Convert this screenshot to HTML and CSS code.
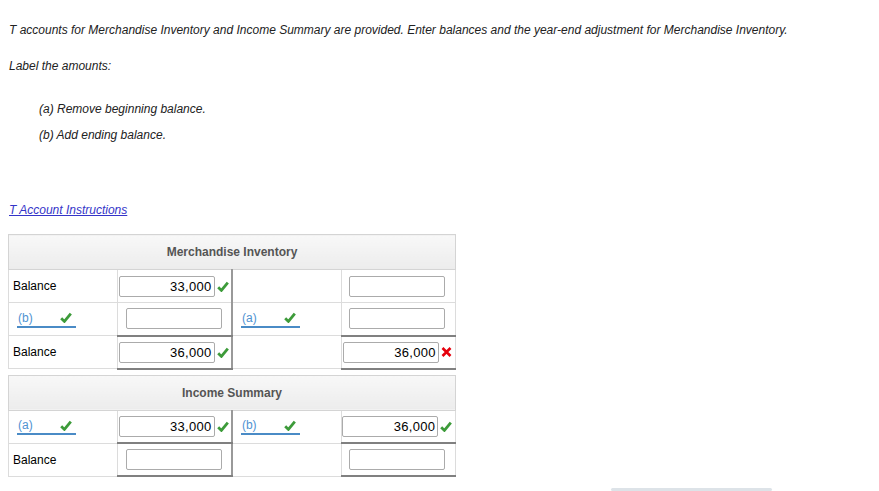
FILE: index.html
```html
<!DOCTYPE html>
<html>
<head>
<meta charset="utf-8">
<link rel="stylesheet" href="styles.css">
</head>
<body>
<div class="page">
  <p class="intro">T accounts for Merchandise Inventory and Income Summary are provided. Enter balances and the year-end adjustment for Merchandise Inventory.</p>
  <p class="label-head">Label the amounts:</p>
  <ul class="steps">
    <li>(a) Remove beginning balance.</li>
    <li>(b) Add ending balance.</li>
  </ul>
  <a class="instr" href="#">T Account Instructions</a>

  <table class="taccount">
    <colgroup><col class="c1"><col class="c2"><col class="c3"><col class="c4"></colgroup>
    <tr class="head"><th colspan="4">Merchandise Inventory</th></tr>
    <tr>
      <td class="lbl">Balance</td>
      <td class="amt dr"><span class="inp">33,000</span><svg class="ok" viewBox="0 0 12 11"><path d="M1.2 6.2 L4.4 9.4 L10.8 1.6"/></svg></td>
      <td class="lbl"></td>
      <td class="amt"><span class="inp"></span></td>
    </tr>
    <tr>
      <td class="lbl"><span class="sel"><span>(b)</span><svg class="ok" viewBox="0 0 12 11"><path d="M1.2 6.2 L4.4 9.4 L10.8 1.6"/></svg></span></td>
      <td class="amt dr tot"><span class="inp"></span></td>
      <td class="lbl"><span class="sel"><span>(a)</span><svg class="ok" viewBox="0 0 12 11"><path d="M1.2 6.2 L4.4 9.4 L10.8 1.6"/></svg></span></td>
      <td class="amt tot"><span class="inp"></span></td>
    </tr>
    <tr>
      <td class="lbl">Balance</td>
      <td class="amt dr tot"><span class="inp">36,000</span><svg class="ok" viewBox="0 0 12 11"><path d="M1.2 6.2 L4.4 9.4 L10.8 1.6"/></svg></td>
      <td class="lbl"></td>
      <td class="amt tot"><span class="inp">36,000</span><svg class="bad" viewBox="0 0 11 10"><path d="M1.5 1 L9.5 9 M9.5 1 L1.5 9"/></svg></td>
    </tr>
  </table>

  <table class="taccount second">
    <colgroup><col class="c1"><col class="c2"><col class="c3"><col class="c4"></colgroup>
    <tr class="head"><th colspan="4">Income Summary</th></tr>
    <tr>
      <td class="lbl"><span class="sel"><span>(a)</span><svg class="ok" viewBox="0 0 12 11"><path d="M1.2 6.2 L4.4 9.4 L10.8 1.6"/></svg></span></td>
      <td class="amt dr tot"><span class="inp">33,000</span><svg class="ok" viewBox="0 0 12 11"><path d="M1.2 6.2 L4.4 9.4 L10.8 1.6"/></svg></td>
      <td class="lbl"><span class="sel"><span>(b)</span><svg class="ok" viewBox="0 0 12 11"><path d="M1.2 6.2 L4.4 9.4 L10.8 1.6"/></svg></span></td>
      <td class="amt tot"><span class="inp">36,000</span><svg class="ok" viewBox="0 0 12 11"><path d="M1.2 6.2 L4.4 9.4 L10.8 1.6"/></svg></td>
    </tr>
    <tr>
      <td class="lbl">Balance</td>
      <td class="amt dr tot"><span class="inp"></span></td>
      <td class="lbl"></td>
      <td class="amt tot"><span class="inp"></span></td>
    </tr>
  </table>
  <div class="bottom-bar"></div>
</div>
</body>
</html>
```

FILE: styles.css
```css
html, body {
  margin: 0;
  padding: 0;
  background: #fff;
}
body {
  font-family: "Liberation Sans", Arial, sans-serif;
  font-size: 12px;
  line-height: 14px;
  color: #222;
}
.page {
  padding-left: 8px;
  padding-top: 23px;
}
.intro, .label-head {
  margin: 0;
  padding-left: 1px;
  font-style: italic;
}
.label-head {
  margin-top: 22px;
}
.steps {
  list-style: none;
  margin: 29px 0 0 0;
  padding: 0 0 0 31px;
  font-style: italic;
}
.steps li {
  margin-bottom: 12px;
}
.steps li:last-child {
  margin-bottom: 0;
}
.instr {
  display: inline-block;
  margin-top: 61px;
  margin-left: 1px;
  font-style: italic;
  color: #3434c8;
  text-decoration: underline;
}
.taccount {
  display: table;
  margin-top: 17px;
  width: 448px;
  table-layout: fixed;
  border-collapse: collapse;
  border: 1px solid #d4d4d4;
}
.taccount.second {
  margin-top: 5px;
}
.c1 { width: 109px; }
.c2 { width: 114px; }
.c3 { width: 109px; }
.c4 { width: 114px; }
.head th {
  height: 34px;
  padding: 0;
  font-weight: bold;
  font-size: 12px;
  color: #555;
  text-align: center;
  background: linear-gradient(to bottom, #f8f8f8, #ececec);
  border-bottom: 1px solid #d4d4d4;
}
.taccount td {
  height: 33px;
  box-sizing: border-box;
  padding: 0 0 0 4px;
  border: 1px solid #dcdcdc;
  vertical-align: middle;
  color: #000;
}
.taccount td.amt {
  padding: 0 0 0 0;
  text-align: center;
  white-space: nowrap;
  font-size: 0;
}
.taccount td.dr {
  border-right: 2px solid #999;
}
.taccount td.tot {
  border-bottom: 2px solid #808080;
}
.inp {
  display: inline-block;
  box-sizing: border-box;
  width: 96px;
  height: 21px;
  margin-left: -2px;
  border: 1px solid #ababab;
  border-radius: 2px;
  background: #fff;
  vertical-align: middle;
  text-align: right;
  padding-right: 2px;
  font-size: 13px;
  letter-spacing: 0.3px;
  line-height: 19px;
  color: #000;
}
.ok, .bad {
  display: inline-block;
  vertical-align: middle;
  margin-left: 2px;
}
.ok {
  width: 12px;
  height: 11px;
}
.ok path {
  fill: none;
  stroke: #3d9b3a;
  stroke-width: 2.8;
  stroke-linecap: butt;
  stroke-linejoin: miter;
}
.bad {
  width: 11px;
  height: 10px;
}
.bad path {
  fill: none;
  stroke: #e5000c;
  stroke-width: 2.6;
}
.sel {
  display: inline-flex;
  align-items: center;
  justify-content: space-between;
  box-sizing: border-box;
  width: 59px;
  margin-left: 4px;
  padding: 0 4px 1px 1px;
  border-bottom: 2px solid #4a8bc6;
  color: #4f93d2;
  font-size: 12px;
  line-height: 14px;
  vertical-align: middle;
}
.sel .ok {
  margin-left: 0;
}
.bottom-bar {
  margin-top: 11px;
  margin-left: 603px;
  width: 161px;
  height: 3px;
  border-radius: 2px;
  background: #dde3e8;
}
```
